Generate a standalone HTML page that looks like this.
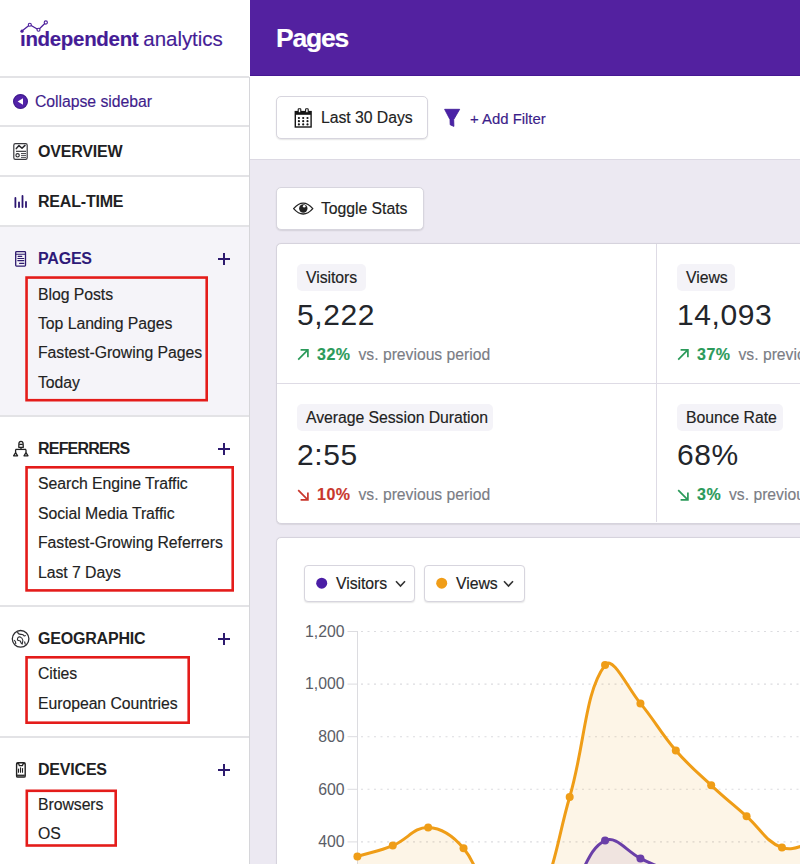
<!DOCTYPE html>
<html><head><meta charset="utf-8">
<style>
*{box-sizing:border-box;margin:0;padding:0}
html,body{width:800px;height:864px;overflow:hidden;background:#fff;font-family:"Liberation Sans",sans-serif;color:#1f2328;-webkit-font-smoothing:antialiased}
.sub,.chip,.chg,.abs{-webkit-text-stroke:0.15px currentColor}
.abs{position:absolute}
#sb{position:absolute;left:0;top:0;width:250px;height:864px;background:#fff}
#sb:after{content:"";position:absolute;left:249px;top:77px;width:1px;height:787px;background:#d6d6da}
.hl{position:absolute;left:0;width:249px;height:2px;background:#e3e3e6}
.nav{position:absolute;left:38px;font-weight:bold;font-size:16px;letter-spacing:-0.2px;color:#1f1f24;white-space:nowrap;line-height:18px}
.sub{position:absolute;left:38px;font-size:15.8px;letter-spacing:-0.05px;color:#222;white-space:nowrap;line-height:18px}
.plus{position:absolute;left:218px;width:12px;height:12px}
.plus:before,.plus:after{content:"";position:absolute;background:#2d1a6e}
.plus:before{left:0;top:5px;width:12px;height:1.6px}
.plus:after{left:5.2px;top:0;width:1.6px;height:12px}
.red{position:absolute;border:2px solid #e31b1b}
#main{position:absolute;left:250px;top:0;width:550px;height:864px;background:#ece9f2}
.btn{position:absolute;background:#fff;border:1px solid #d7d5de;border-radius:5px;box-shadow:0 1px 1.5px rgba(0,0,0,0.1)}
.card{position:absolute;background:#fff;border:1px solid #d6d3dd;border-radius:5px;box-shadow:0 0.5px 1px rgba(0,0,0,0.08)}
.chip{position:absolute;background:#f4f3f8;border-radius:5px;font-size:15.8px;letter-spacing:-0.05px;line-height:18px;color:#222;white-space:nowrap}
.big{position:absolute;font-size:30px;letter-spacing:0.6px;color:#23262b;white-space:nowrap;line-height:32px}
.chg{position:absolute;font-size:15.4px;line-height:18px;white-space:nowrap;color:#7b7d85}
.chg b{font-weight:bold}
</style></head><body>
<div id="sb">
  <!-- logo -->
  <div class="abs" style="left:20px;top:27px;font-size:20.5px;line-height:24px;color:#451c96;white-space:nowrap"><span style="font-weight:bold;letter-spacing:-0.32px">&#305;ndependent</span><span style="letter-spacing:-0.05px;margin-left:5px">analytics</span></div>
  <svg class="abs" style="left:0;top:0" width="60" height="40" viewBox="0 0 60 40">
    <path d="M22 31 L29.8 24.7 L38.5 29.8 L45.8 22.5" fill="none" stroke="#4a1d9b" stroke-width="1.3"/>
    <circle cx="22" cy="31.2" r="1.6" fill="#4a1d9b"/>
    <circle cx="29.8" cy="24.7" r="1.5" fill="#fff" stroke="#4a1d9b" stroke-width="1.1"/>
    <circle cx="38.5" cy="29.8" r="1.5" fill="#fff" stroke="#4a1d9b" stroke-width="1.1"/>
    <circle cx="45.8" cy="22.5" r="1.6" fill="#fff" stroke="#4a1d9b" stroke-width="1.1"/>
  </svg>
  <div class="hl" style="top:76px"></div>
  <!-- collapse -->
  <svg class="abs" style="left:13px;top:94px" width="15" height="15" viewBox="0 0 15 15"><circle cx="7.5" cy="7.5" r="6.9" fill="#5222a8" stroke="#3f1a8e" stroke-width="1.2"/><path d="M10 4.2 L10 10.8 L4.6 7.5 Z" fill="#fff"/></svg>
  <div class="sub" style="left:35px;top:93px;color:#3f1d8c">Collapse sidebar</div>
  <div class="hl" style="top:125px"></div>
  <div class="nav" style="top:143px">OVERVIEW</div>
  <div class="hl" style="top:175px"></div>
  <div class="nav" style="top:193px">REAL-TIME</div>
  <div class="hl" style="top:225px"></div>
  <!-- pages -->
  <div class="abs" style="left:0;top:227px;width:249px;height:188px;background:#f5f4f9"></div>
  <div class="nav" style="top:250px;color:#2e1a78">PAGES</div>
  <div class="plus" style="top:253px"></div>
  <div class="sub" style="top:286px">Blog Posts</div>
  <div class="sub" style="top:315px">Top Landing Pages</div>
  <div class="sub" style="top:344px">Fastest-Growing Pages</div>
  <div class="sub" style="top:374px">Today</div>
  <div class="hl" style="top:415px"></div>
  <!-- referrers -->
  <div class="nav" style="top:440px;letter-spacing:-0.8px">REFERRERS</div>
  <div class="plus" style="top:443px"></div>
  <div class="sub" style="top:475px">Search Engine Traffic</div>
  <div class="sub" style="top:505px">Social Media Traffic</div>
  <div class="sub" style="top:534px">Fastest-Growing Referrers</div>
  <div class="sub" style="top:564px">Last 7 Days</div>
  <div class="hl" style="top:605px"></div>
  <!-- geographic -->
  <div class="nav" style="top:630px">GEOGRAPHIC</div>
  <div class="plus" style="top:633px"></div>
  <div class="sub" style="top:665px">Cities</div>
  <div class="sub" style="top:695px">European Countries</div>
  <div class="hl" style="top:736px"></div>
  <!-- devices -->
  <div class="nav" style="top:761px">DEVICES</div>
  <div class="plus" style="top:764px"></div>
  <div class="sub" style="top:796px">Browsers</div>
  <div class="sub" style="top:825px">OS</div>
<svg class="abs" style="left:0;top:0" width="250" height="864" viewBox="0 0 250 864"><g fill="none" stroke="#e41c1a" stroke-width="2.6"><rect x="26.55" y="277.55" width="180.15" height="122.65" /><rect x="26.55" y="467.30" width="206.15" height="123.10" /><rect x="26.55" y="657.30" width="162.15" height="65.40" /><rect x="26.80" y="790.80" width="88.90" height="54.70" /></g></svg>
  <!-- overview icon -->
  <svg class="abs" style="left:0;top:130px" width="40" height="40" viewBox="0 130 40 40">
    <rect x="13.8" y="143.6" width="13.4" height="15.8" rx="1.6" fill="none" stroke="#3a3a3e" stroke-width="1.2"/>
    <path d="M16.3 148.6 L19 145.6 L22 148.3 L25 145.4" fill="none" stroke="#2a2a2e" stroke-width="1.5" stroke-linejoin="round" stroke-linecap="round"/>
    <line x1="16" y1="151.3" x2="26" y2="151.3" stroke="#2a2a2e" stroke-width="1.1"/>
    <circle cx="17.6" cy="155.3" r="1.7" fill="none" stroke="#2a2a2e" stroke-width="1.1"/>
    <g stroke="#3a3a3e" stroke-width="0.9"><line x1="21" y1="153.5" x2="26" y2="153.5"/><line x1="21" y1="155.4" x2="26" y2="155.4"/><line x1="21" y1="157.4" x2="26" y2="157.4"/></g>
  </svg>
  <!-- realtime icon -->
  <svg class="abs" style="left:0;top:190px" width="40" height="24" viewBox="0 190 40 24">
    <g stroke="#2b1470" stroke-width="1.8" stroke-linecap="round">
      <line x1="15.4" y1="198" x2="15.4" y2="207.1"/>
      <line x1="19" y1="202.5" x2="19" y2="207.1"/>
      <line x1="22.5" y1="196" x2="22.5" y2="207.1"/>
      <line x1="26" y1="202" x2="26" y2="207.1"/>
    </g>
  </svg>
  <!-- pages icon -->
  <svg class="abs" style="left:0;top:246px" width="40" height="26" viewBox="0 246 40 26">
    <rect x="15.7" y="251.7" width="9.8" height="14.4" rx="0.8" fill="none" stroke="#2e1a6e" stroke-width="1.3"/>
    <g stroke="#2e1a6e" stroke-width="1.1" stroke-linecap="round">
      <line x1="16" y1="254.2" x2="25.2" y2="254.2"/>
      <line x1="18.2" y1="256.4" x2="21.8" y2="256.4"/>
      <line x1="17.8" y1="258.5" x2="23.8" y2="258.5"/>
      <line x1="17.8" y1="260.6" x2="23.8" y2="260.6"/>
      <line x1="19.6" y1="263.4" x2="23.8" y2="263.4"/>
    </g>
  </svg>
  <!-- referrers icon -->
  <svg class="abs" style="left:0;top:436px" width="40" height="24" viewBox="0 436 40 24">
    <g fill="none" stroke="#222" stroke-width="1.3" stroke-linejoin="round">
      <path d="M18.8 447.3 L18.9 443.6 Q19 441.3 21 441.3 Q23 441.3 23.1 443.6 L23.3 447.3 Z"/>
      <line x1="19.2" y1="444.4" x2="22.8" y2="444.4"/>
      <line x1="21" y1="447.3" x2="21" y2="449.4"/>
      <line x1="15.6" y1="449.4" x2="26" y2="449.4"/>
      <path d="M15.6 449.4 L15.6 452.6"/><path d="M26 449.4 L26 452.6"/>
      <path d="M13.6 455.8 L15.6 452.6 L17.6 455.8 Z"/>
      <path d="M24 455.8 L26 452.6 L28 455.8 Z"/>
    </g>
  </svg>
  <!-- geographic icon -->
  <svg class="abs" style="left:0;top:626px" width="40" height="26" viewBox="0 626 40 26">
    <circle cx="20.6" cy="638.8" r="8.3" fill="none" stroke="#2e2e32" stroke-width="1.3"/>
    <g fill="none" stroke="#2e2e32" stroke-width="1.1" stroke-linejoin="round">
      <path d="M17.5 631.8 Q18 634.5 21 634.4 Q23.5 634.4 24.2 636 L25.8 635.5"/>
      <path d="M17.4 640 Q17.5 636.4 20.2 636.9 Q22.4 637.6 22.9 640.5 L22.2 644.2 Q20.8 643 20.3 641 Q18.4 640.6 17.4 640 Z"/>
      <path d="M14.3 640.2 Q16 641.8 15.8 644"/>
      <path d="M24.5 641.5 L25.4 644.6"/>
    </g>
  </svg>
  <!-- devices icon -->
  <svg class="abs" style="left:0;top:758px" width="40" height="24" viewBox="0 758 40 24">
    <rect x="16.6" y="762.7" width="8.6" height="14.4" rx="1.2" fill="none" stroke="#222" stroke-width="1.4"/>
    <path d="M16.8 763.6 L18.6 763.6 L19.4 765.7 L22.4 765.7 L23.2 763.6 L25 763.6" fill="none" stroke="#222" stroke-width="1.3" stroke-linejoin="round"/>
    <rect x="17" y="774.6" width="7.8" height="2" fill="#333"/>
    <g stroke="#222" stroke-width="1.1" stroke-linecap="round"><line x1="18.5" y1="769" x2="18.5" y2="772.2"/><line x1="20.5" y1="767.8" x2="20.5" y2="772.2"/><line x1="22.5" y1="768.6" x2="22.5" y2="772.2"/></g>
  </svg>

</div>

<div id="main">
  <div class="abs" style="left:0;top:0;width:550px;height:76px;background:#5321a0;border-bottom:1px solid #461893"></div>
  <div class="abs" style="left:26px;top:24px;font-size:26.5px;font-weight:bold;color:#fff;line-height:28px;letter-spacing:-1.2px">Pages</div>
  <div class="abs" style="left:0;top:76px;width:550px;height:84px;background:#fff;border-bottom:1px solid #dcd9e3"></div>
  <div class="btn" style="left:26px;top:96px;width:152px;height:43px"></div>
  
  <!-- calendar -->
  <svg class="abs" style="left:40px;top:104px" width="24" height="26" viewBox="290 104 24 26">
    <rect x="295.3" y="111.6" width="15.8" height="15.4" fill="none" stroke="#161616" stroke-width="1.4"/>
    <rect x="295.3" y="111.6" width="15.8" height="3.2" fill="#161616"/>
    <rect x="298.2" y="108.8" width="2.6" height="4" rx="0.6" fill="#fff" stroke="#161616" stroke-width="1.1"/>
    <rect x="305.6" y="108.8" width="2.6" height="4" rx="0.6" fill="#fff" stroke="#161616" stroke-width="1.1"/>
    <g fill="#161616"><circle cx="298.9" cy="118" r="1.1"/><circle cx="303.2" cy="118" r="1.1"/><circle cx="307.5" cy="118" r="1.1"/>
    <circle cx="298.9" cy="121.2" r="1.1"/><circle cx="303.2" cy="121.2" r="1.1"/><circle cx="307.5" cy="121.2" r="1.1"/>
    <circle cx="298.9" cy="124.4" r="1.1"/><circle cx="303.2" cy="124.4" r="1.1"/><circle cx="307.5" cy="124.4" r="1.1"/></g>
  </svg>
  <!-- funnel -->
  <svg class="abs" style="left:190px;top:104px" width="24" height="26" viewBox="440 104 24 26">
    <path d="M444.6 109.3 L459.7 109.3 L453.7 119.6 L453.9 126.4 L450.2 124.8 L450 119.6 Z" fill="#4b22a6" stroke="#3d1a96" stroke-width="0.8" stroke-linejoin="round"/>
  </svg>
<div class="abs" style="left:71px;top:109px;font-size:15.8px;letter-spacing:-0.05px;line-height:18px;color:#222">Last 30 Days</div>
  <div class="abs" style="left:220px;top:110px;font-size:14.9px;line-height:18px;color:#3b1e8a">+ Add Filter</div>
  <div class="btn" style="left:26px;top:187px;width:148px;height:43px"></div>
  <div class="abs" style="left:71px;top:200px;font-size:15.8px;letter-spacing:-0.05px;line-height:18px;color:#222">Toggle Stats</div>
  <!-- eye -->
  <svg class="abs" style="left:40px;top:196px" width="24" height="24" viewBox="290 196 24 24">
    <path d="M293.6 208.6 Q303.2 197.8 312.8 208.6 Q303.2 219.4 293.6 208.6 Z" fill="none" stroke="#222" stroke-width="1.3" stroke-linejoin="round"/>
    <circle cx="303.3" cy="208.5" r="4.2" fill="#222"/>
    <circle cx="304.2" cy="206.3" r="1.3" fill="#fff"/>
  </svg>

  <div class="card" style="left:26px;top:243px;width:540px;height:281px"></div>
  <div class="abs" style="left:406px;top:244px;width:1px;height:278px;background:#dedbe5"></div>
  <div class="abs" style="left:27px;top:383px;width:530px;height:1px;background:#dedbe5"></div>

  <div class="chip" style="left:47px;top:264px;width:69px;height:27px;padding:5px 9px 0">Visitors</div>
  <div class="big" style="left:47px;top:299px">5,222</div>
  <svg class="abs" style="left:46.5px;top:347.5px" width="14" height="14" viewBox="0 0 14 14"><path d="M1.2 11.6 L10.6 2.2 M3.6 1.9 L10.9 1.9 L10.9 9.2" fill="none" stroke="#2b9a5a" stroke-width="1.7"/></svg><div class="chg" style="left:67px;top:346px;color:#2b9a5a;font-weight:bold;font-size:16px;letter-spacing:0.5px">32%</div><div class="chg" style="left:108.5px;top:346px;font-size:15.7px">vs. previous period</div>

  <div class="chip" style="left:427px;top:264px;width:58px;height:27px;padding:5px 9px 0">Views</div>
  <div class="big" style="left:427px;top:299px">14,093</div>
  <svg class="abs" style="left:426.5px;top:347.5px" width="14" height="14" viewBox="0 0 14 14"><path d="M1.2 11.6 L10.6 2.2 M3.6 1.9 L10.9 1.9 L10.9 9.2" fill="none" stroke="#2b9a5a" stroke-width="1.7"/></svg><div class="chg" style="left:447px;top:346px;color:#2b9a5a;font-weight:bold;font-size:16px;letter-spacing:0.5px">37%</div><div class="chg" style="left:488.5px;top:346px;font-size:15.7px">vs. previous period</div>

  <div class="chip" style="left:47px;top:404px;width:196px;height:27px;padding:5px 9px 0">Average Session Duration</div>
  <div class="big" style="left:47px;top:439px">2:55</div>
  <svg class="abs" style="left:46.5px;top:487.5px" width="14" height="14" viewBox="0 0 14 14"><path d="M1.2 2.2 L10.6 11.6 M3.6 11.9 L10.9 11.9 L10.9 4.6" fill="none" stroke="#c9372c" stroke-width="1.7"/></svg><div class="chg" style="left:67px;top:486px;color:#c9372c;font-weight:bold;font-size:16px;letter-spacing:0.5px">10%</div><div class="chg" style="left:108.5px;top:486px;font-size:15.7px">vs. previous period</div>

  <div class="chip" style="left:427px;top:404px;width:106px;height:27px;padding:5px 9px 0">Bounce Rate</div>
  <div class="big" style="left:427px;top:439px">68%</div>
  <svg class="abs" style="left:426.5px;top:487.5px" width="14" height="14" viewBox="0 0 14 14"><path d="M1.2 2.2 L10.6 11.6 M3.6 11.9 L10.9 11.9 L10.9 4.6" fill="none" stroke="#2b9a5a" stroke-width="1.7"/></svg><div class="chg" style="left:447px;top:486px;color:#2b9a5a;font-weight:bold;font-size:16px;letter-spacing:0.5px">3%</div><div class="chg" style="left:479px;top:486px;font-size:15.7px">vs. previous period</div>

  <div class="card" style="left:26px;top:537px;width:540px;height:400px"></div>

  <div class="btn" style="left:54px;top:565px;width:111px;height:37px;border-radius:4px"></div>
  <svg class="abs" style="left:66px;top:577px" width="12" height="12"><circle cx="5.7" cy="6.2" r="5.5" fill="#4b1ea6"/></svg>
  <div class="abs" style="left:86px;top:575px;font-size:15.8px;letter-spacing:-0.05px;line-height:18px;color:#222">Visitors</div>
  <svg class="abs" style="left:145px;top:580px" width="12" height="9"><path d="M1 1.2 L5.5 6 L10 1.2" fill="none" stroke="#333" stroke-width="1.6"/></svg>
  <div class="btn" style="left:174px;top:565px;width:101px;height:37px;border-radius:4px"></div>
  <svg class="abs" style="left:186px;top:577px" width="12" height="12"><circle cx="5.7" cy="6.2" r="5.5" fill="#f09d18"/></svg>
  <div class="abs" style="left:206px;top:575px;font-size:15.8px;letter-spacing:-0.05px;line-height:18px;color:#222">Views</div>
  <svg class="abs" style="left:253px;top:580px" width="12" height="9"><path d="M1 1.2 L5.5 6 L10 1.2" fill="none" stroke="#333" stroke-width="1.6"/></svg>
</div>

<svg class="abs" style="left:0;top:0" width="800" height="864" viewBox="0 0 800 864">
  <defs><clipPath id="ca"><rect x="357.4" y="600" width="443" height="264"/></clipPath></defs>
  <g font-family="Liberation Sans" font-size="15.8" fill="#5a5d66" text-anchor="end">
    <text x="344.5" y="636.6">1,200</text>
    <text x="344.5" y="689.2">1,000</text>
    <text x="344.5" y="741.8">800</text>
    <text x="344.5" y="794.5">600</text>
    <text x="344.5" y="847">400</text>
  </g>
  <g stroke="#dcdce0" stroke-width="1">
    <line x1="347.5" y1="631.5" x2="357.5" y2="631.5"/>
    <line x1="347.5" y1="684.1" x2="357.5" y2="684.1"/>
    <line x1="347.5" y1="736.7" x2="357.5" y2="736.7"/>
    <line x1="347.5" y1="789.3" x2="357.5" y2="789.3"/>
    <line x1="347.5" y1="841.9" x2="357.5" y2="841.9"/>
    <line x1="357.5" y1="631" x2="357.5" y2="864"/>
  </g>
  <g stroke="#dcdce0" stroke-width="1.1" stroke-dasharray="2 4.5">
    <line x1="361" y1="631.5" x2="800" y2="631.5"/>
    <line x1="361" y1="684.1" x2="800" y2="684.1"/>
    <line x1="361" y1="736.7" x2="800" y2="736.7"/>
    <line x1="361" y1="789.3" x2="800" y2="789.3"/>
    <line x1="361" y1="841.9" x2="800" y2="841.9"/>
  </g>
  <g clip-path="url(#ca)">
    <path d="M357.40 856.40 C371.55 852.08 379.14 851.19 392.78 845.60 C407.45 839.59 414.24 826.87 428.16 827.40 C442.54 827.95 453.45 836.02 463.54 848.30 C481.75 870.46 479.88 897.84 498.92 913.50 C508.18 921.12 527.55 917.62 534.30 906.50 C555.85 871.02 556.74 841.16 569.68 797.00 C585.04 744.60 584.58 692.19 605.06 665.10 C612.88 654.75 627.15 687.36 640.44 703.40 C655.45 721.52 660.46 732.72 675.82 750.50 C688.76 765.48 696.67 771.79 711.20 785.30 C724.97 798.11 732.46 803.87 746.58 816.30 C760.76 828.79 765.86 841.75 781.96 847.60 C794.17 852.03 803.11 843.53 817.34 842.00 C831.42 840.49 838.57 840.80 852.72 840.00 L852.72 947.2 L357.40 947.2 Z" fill="rgba(240,157,23,0.1)"/>
    <path d="M498.92 960.00 C513.07 948.00 520.94 942.83 534.30 930.00 C549.25 915.63 556.83 908.24 569.68 892.00 C585.13 872.48 587.75 848.82 605.06 840.60 C616.05 835.38 626.44 851.00 640.44 858.40 C654.74 865.96 664.29 867.15 675.82 878.00 C692.59 893.79 694.90 908.41 711.20 925.00 C723.20 937.21 732.43 940.00 746.58 950.00 L746.58 947.2 L498.92 947.2 Z" fill="rgba(90,40,150,0.08)"/>
    <path d="M357.40 856.40 C371.55 852.08 379.14 851.19 392.78 845.60 C407.45 839.59 414.24 826.87 428.16 827.40 C442.54 827.95 453.45 836.02 463.54 848.30 C481.75 870.46 479.88 897.84 498.92 913.50 C508.18 921.12 527.55 917.62 534.30 906.50 C555.85 871.02 556.74 841.16 569.68 797.00 C585.04 744.60 584.58 692.19 605.06 665.10 C612.88 654.75 627.15 687.36 640.44 703.40 C655.45 721.52 660.46 732.72 675.82 750.50 C688.76 765.48 696.67 771.79 711.20 785.30 C724.97 798.11 732.46 803.87 746.58 816.30 C760.76 828.79 765.86 841.75 781.96 847.60 C794.17 852.03 803.11 843.53 817.34 842.00 C831.42 840.49 838.57 840.80 852.72 840.00" fill="none" stroke="#ef9d17" stroke-width="3"/>
    <path d="M498.92 960.00 C513.07 948.00 520.94 942.83 534.30 930.00 C549.25 915.63 556.83 908.24 569.68 892.00 C585.13 872.48 587.75 848.82 605.06 840.60 C616.05 835.38 626.44 851.00 640.44 858.40 C654.74 865.96 664.29 867.15 675.82 878.00 C692.59 893.79 694.90 908.41 711.20 925.00 C723.20 937.21 732.43 940.00 746.58 950.00" fill="none" stroke="#6a3fa8" stroke-width="3"/>
  </g>
  <g fill="#ef9d17">
    <circle cx="357.4" cy="856.4" r="4"/><circle cx="392.78" cy="845.6" r="4"/><circle cx="428.16" cy="827.4" r="4"/><circle cx="463.54" cy="848.3" r="4"/>
    <circle cx="569.68" cy="797" r="4"/><circle cx="605.06" cy="665.1" r="4"/><circle cx="640.44" cy="703.4" r="4"/><circle cx="675.82" cy="750.5" r="4"/>
    <circle cx="711.2" cy="785.3" r="4"/><circle cx="746.58" cy="816.3" r="4"/><circle cx="781.96" cy="847.6" r="4"/>
  </g>
  <g fill="#6a3fa8">
    <circle cx="605.06" cy="840.6" r="4"/><circle cx="640.44" cy="858.4" r="4"/>
  </g>
</svg>

</body></html>
